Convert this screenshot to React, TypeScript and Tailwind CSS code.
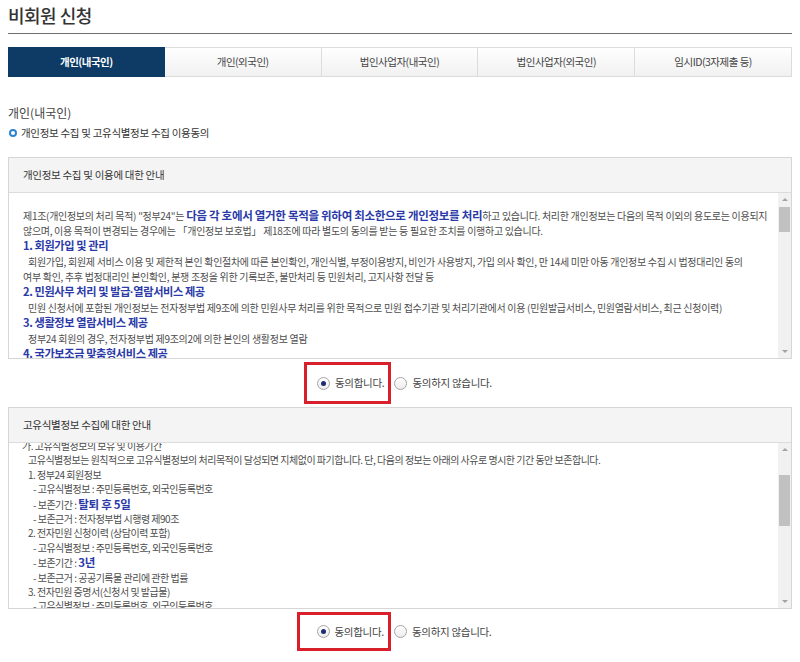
import React from "react"

const tabs = ["개인(내국인)", "개인(외국인)", "법인사업자(내국인)", "법인사업자(외국인)", "임시ID(3자제출 등)"]

function Scrollbar({ thumbTop, thumbHeight }: { thumbTop: number; thumbHeight: number }) {
  return (
    <div className="w-[13px] shrink-0 bg-[#f1f1f1] flex flex-col items-center">
      <div className="h-[13px] flex items-center justify-center">
        <div className="w-0 h-0 border-l-[3px] border-r-[3px] border-b-[3px] border-l-transparent border-r-transparent border-b-[#a3a3a3]" />
      </div>
      <div className="flex-1 w-full px-[1px]">
        <div className="w-full bg-[#c1c1c1]" style={{ marginTop: thumbTop, height: thumbHeight }} />
      </div>
      <div className="h-[13px] flex items-center justify-center">
        <div className="w-0 h-0 border-l-[3px] border-r-[3px] border-t-[3px] border-l-transparent border-r-transparent border-t-[#a3a3a3]" />
      </div>
    </div>
  )
}

function Radio({ checked }: { checked?: boolean }) {
  return (
    <span className="w-[13px] h-[13px] rounded-full border border-[#a5a5a5] bg-gradient-to-b from-white to-[#ececec] flex items-center justify-center shrink-0">
      {checked && <span className="w-[5px] h-[5px] rounded-full bg-[#1d2b75]" />}
    </span>
  )
}

function AgreeRow({ boxClass, rowClass }: { boxClass: string; rowClass: string }) {
  return (
    <div className={`flex justify-center text-[10.5px] text-[#444] tracking-[-0.3px] ${rowClass}`}>
      <div className={`border-[3px] border-[#d7202b] flex items-center gap-[5px] ${boxClass}`}>
        <Radio checked />
        <span>동의합니다.</span>
      </div>
      <div className="self-stretch flex items-center gap-[5px] ml-[3px]">
        <Radio />
        <span>동의하지 않습니다.</span>
      </div>
    </div>
  )
}

const B = ({ children }: { children: React.ReactNode }) => (
  <b className="text-[#2b3aa8] font-bold text-[11.5px] tracking-[-0.3px]">{children}</b>
)

const H = ({ children }: { children: React.ReactNode }) => (
  <div className="text-[#2b3aa8] font-bold text-[11.2px] tracking-[-0.4px]">{children}</div>
)

export default function App() {
  return (
    <div className="w-[800px] h-[662px] bg-white px-[8px] font-['Noto_Sans_CJK_KR',sans-serif] text-[#333] overflow-hidden">
      <div className="pt-[3px] pb-[6px] border-b border-[#6f6f6f]">
        <h1 className="text-[18px] leading-[24px] font-medium text-[#333] tracking-[-0.5px]">비회원 신청</h1>
      </div>

      <div className="mt-[13px] grid grid-cols-5 h-[30px] text-[10.5px] tracking-[-0.5px]">
        {tabs.map((t, i) =>
          i === 0 ? (
            <div key={t} className="bg-[#0d3b66] text-white font-bold flex items-center justify-center">{t}</div>
          ) : (
            <div key={t} className="border-y border-r border-[#dcdcdc] bg-gradient-to-b from-white to-[#f1f1f1] text-[#444] flex items-center justify-center">{t}</div>
          )
        )}
      </div>

      <div className="mt-[27px] text-[12px] leading-[18px] text-[#444]">개인(내국인)</div>
      <div className="mt-[3px] flex items-center gap-[4px] text-[10.5px] leading-[16px] text-[#333] tracking-[-0.3px]">
        <span className="ml-[1px] w-[8px] h-[8px] rounded-full border-2 border-[#2a86d0]" />
        <span>개인정보 수집 및 고유식별정보 수집 이용동의</span>
      </div>

      <div className="mt-[16px] border border-[#d6d6d6]">
        <div className="h-[35px] bg-[#f4f4f4] border-b border-[#dcdcdc] px-[14px] flex items-center text-[10.5px] tracking-[-0.3px] text-[#333]">개인정보 수집 및 이용에 대한 안내</div>
        <div className="flex h-[165px]">
          <div className="flex-1 overflow-hidden pl-[14px] pt-[15px] text-[10px] leading-[15.2px] text-[#4d4d4d] whitespace-nowrap tracking-[-0.3px]">
            <div>제1조(개인정보의 처리 목적) "정부24"는 <B>다음 각 호에서 열거한 목적을 위하여 최소한으로 개인정보를 처리</B>하고 있습니다. 처리한 개인정보는 다음의 목적 이외의 용도로는 이용되지</div>
            <div>않으며, 이용 목적이 변경되는 경우에는 「개인정보 보호법」 제18조에 따라 별도의 동의를 받는 등 필요한 조치를 이행하고 있습니다.</div>
            <H>1. 회원가입 및 관리</H>
            <div className="pl-[5px]">회원가입, 회원제 서비스 이용 및 제한적 본인 확인절차에 따른 본인확인, 개인식별, 부정이용방지, 비인가 사용방지, 가입 의사 확인, 만 14세 미만 아동 개인정보 수집 시 법정대리인 동의</div>
            <div>여부 확인, 추후 법정대리인 본인확인, 분쟁 조정을 위한 기록보존, 불만처리 등 민원처리, 고지사항 전달 등</div>
            <H>2. 민원사무 처리 및 발급<span className="font-['Liberation_Sans',sans-serif]">·</span>열람서비스 제공</H>
            <div className="pl-[5px]">민원 신청서에 포함된 개인정보는 전자정부법 제9조에 의한 민원사무 처리를 위한 목적으로 민원 접수기관 및 처리기관에서 이용 (민원발급서비스, 민원열람서비스, 최근 신청이력)</div>
            <H>3. 생활정보 열람서비스 제공</H>
            <div className="pl-[5px]">정부24 회원의 경우, 전자정부법 제9조의2에 의한 본인의 생활정보 열람</div>
            <H>4. 국가보조금 맞춤형서비스 제공</H>
            <div className="pl-[5px]">국가보조금 맞춤형서비스 제공을 위한 본인 및 가구원 정보 확인</div>
          </div>
          <Scrollbar thumbTop={1} thumbHeight={25} />
        </div>
      </div>

      <AgreeRow rowClass="h-[48px] pr-[4px] items-center" boxClass="h-[42px] pl-[10px] pr-[4px]" />

      <div className="border border-[#d6d6d6]">
        <div className="h-[35px] bg-[#f4f4f4] border-b border-[#dcdcdc] px-[14px] flex items-center text-[10.5px] tracking-[-0.3px] text-[#333]">고유식별정보 수집에 대한 안내</div>
        <div className="flex h-[165px]">
          <div className="flex-1 overflow-hidden pl-[13px] text-[10px] leading-[14.4px] text-[#4d4d4d] whitespace-nowrap tracking-[-0.5px]">
            <div className="-mt-[4px]">가. 고유식별정보의 보유 및 이용기간</div>
            <div className="pl-[6px]">고유식별정보는 원칙적으로 고유식별정보의 처리목적이 달성되면 지체없이 파기합니다. 단, 다음의 정보는 아래의 사유로 명시한 기간 동안 보존합니다.</div>
            <div className="pl-[6px]">1. 정부24 회원정보</div>
            <div className="pl-[11px]">- 고유식별정보 : 주민등록번호, 외국인등록번호</div>
            <div className="pl-[11px]">- 보존기간 : <B>탈퇴 후 5일</B></div>
            <div className="pl-[11px]">- 보존근거 : 전자정부법 시행령 제90조</div>
            <div className="pl-[6px]">2. 전자민원 신청이력 (상담이력 포함)</div>
            <div className="pl-[11px]">- 고유식별정보 : 주민등록번호, 외국인등록번호</div>
            <div className="pl-[11px]">- 보존기간 : <B>3년</B></div>
            <div className="pl-[11px]">- 보존근거 : 공공기록물 관리에 관한 법률</div>
            <div className="pl-[6px]">3. 전자민원 증명서(신청서 및 발급물)</div>
            <div className="pl-[11px]">- 고유식별정보 : 주민등록번호, 외국인등록번호</div>
          </div>
          <Scrollbar thumbTop={19} thumbHeight={51} />
        </div>
      </div>

      <AgreeRow rowClass="h-[42px] pt-[3px] pr-[12px] items-start" boxClass="h-[39px] pl-[17px] pr-[4px]" />
    </div>
  )
}
